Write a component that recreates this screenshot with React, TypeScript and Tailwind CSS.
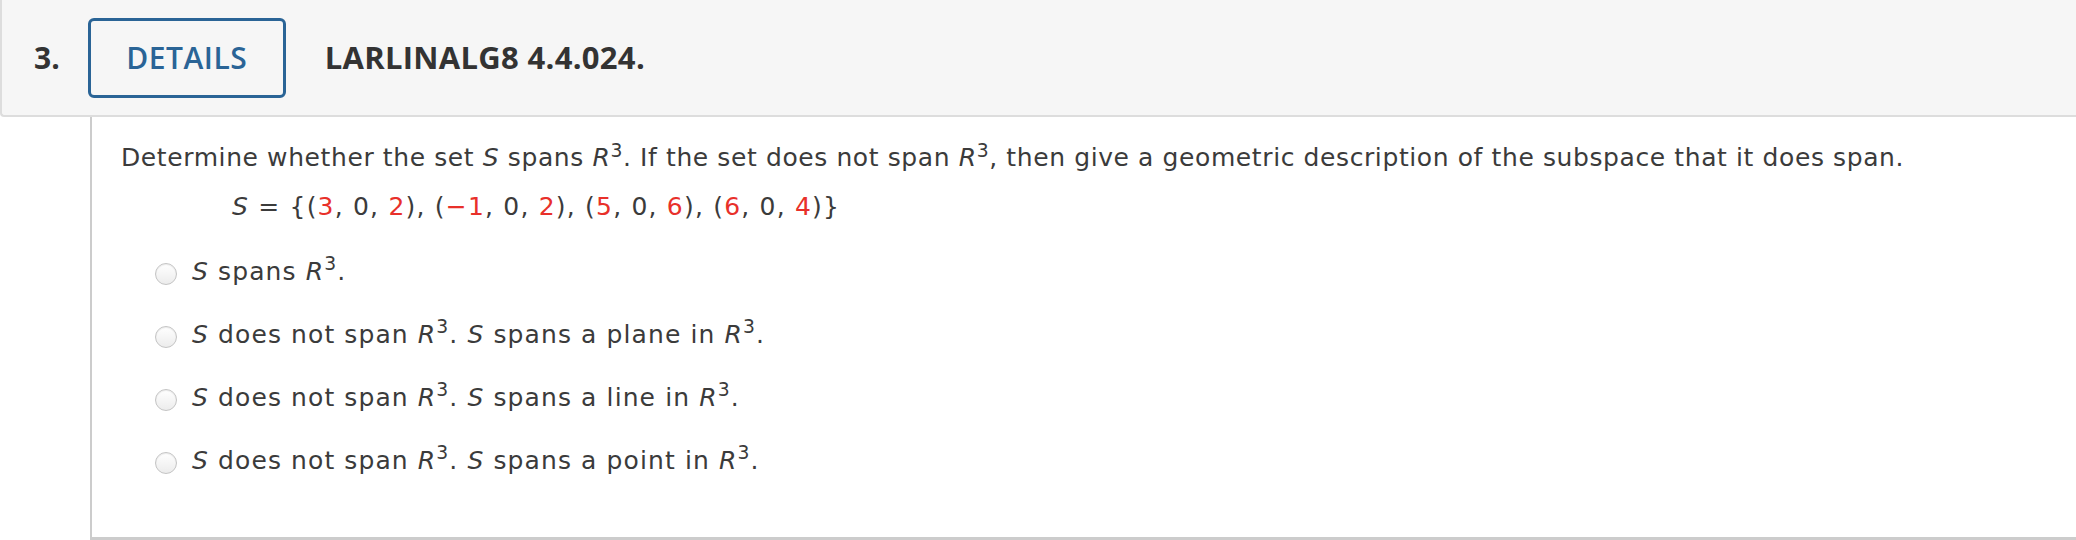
import React from "react";

const R = () => (
  <span>
    <i>R</i>
    <sup>3</sup>
  </span>
);

const S = () => <i>S</i>;

const Red = ({ children }: { children: React.ReactNode }) => (
  <span className="text-[#e8302a]">{children}</span>
);

const Radio = () => (
  <span className="mt-[4px] inline-block h-[22px] w-[22px] shrink-0 rounded-full border border-[#c4c4c4] bg-gradient-to-b from-[#ffffff] to-[#ececec] shadow-[inset_0_1px_1px_rgba(0,0,0,0.08)]" />
);

const Option = ({ children }: { children: React.ReactNode }) => (
  <div className="flex h-[63px] items-center gap-[15px] pl-[34px]">
    <Radio />
    <div className="leading-[32px] tracking-[1.1px]">{children}</div>
  </div>
);

export default function App() {
  return (
    <div className="w-[2076px] h-[540px] overflow-hidden bg-white">
      <div
        className="flex h-[117px] items-center border-b-2 border-l-2 border-[#dddddd] bg-[#f6f6f6] rounded-bl-[4px] pl-[32px] text-[#333333]"
        style={{ fontFamily: '"Open Sans", "Liberation Sans", sans-serif' }}
      >
        <span className="text-[30px] font-bold leading-none">3.</span>
        <div className="ml-[28px] flex h-[80px] w-[198px] items-center justify-center rounded-[6px] border-[3px] border-[#2a6496] bg-[#f6f6f6]">
          <span className="text-[30px] font-semibold leading-none tracking-[0.5px] text-[#2a6496]">
            DETAILS
          </span>
        </div>
        <span className="ml-[39px] text-[31px] font-bold leading-none tracking-[0.3px]">
          LARLINALG8 4.4.024.
        </span>
      </div>
      <div className="ml-[90px] h-[423px] border-b-[3px] border-l-2 border-[#cccccc]">
        <div
          className="pl-[29px] pt-[25px] text-[25px] text-[#3b3b3b]"
          style={{ fontFamily: '"DejaVu Sans", Verdana, sans-serif' }}
        >
          <p className="leading-[32px] tracking-[0.6px]">
            Determine whether the set <S /> spans <R />. If the set does not span <R />, then give a
            geometric description of the subspace that it does span.
          </p>
          <p className="mt-[17px] pl-[111px] leading-[32px] tracking-[1.2px]">
            <S /> = {"{"}(<Red>3</Red>, 0, <Red>2</Red>), (<Red>−1</Red>, 0, <Red>2</Red>), (
            <Red>5</Red>, 0, <Red>6</Red>), (<Red>6</Red>, 0, <Red>4</Red>){"}"}
          </p>
          <div className="mt-[17px]">
            <Option>
              <S /> spans <R />.
            </Option>
            <Option>
              <S /> does not span <R />. <S /> spans a plane in <R />.
            </Option>
            <Option>
              <S /> does not span <R />. <S /> spans a line in <R />.
            </Option>
            <Option>
              <S /> does not span <R />. <S /> spans a point in <R />.
            </Option>
          </div>
        </div>
      </div>
    </div>
  );
}
